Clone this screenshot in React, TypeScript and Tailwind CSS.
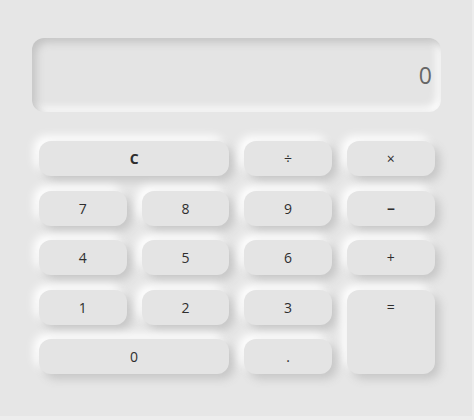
const keys: { label: string; className?: string }[] = [
  { label: "C", className: "col-span-2 font-bold" },
  { label: "÷" },
  { label: "×" },
  { label: "7" },
  { label: "8" },
  { label: "9" },
  { label: "−", className: "font-bold" },
  { label: "4" },
  { label: "5" },
  { label: "6" },
  { label: "+" },
  { label: "1" },
  { label: "2" },
  { label: "3" },
  { label: "=", className: "row-span-2 items-start pt-[6px]" },
  { label: "0", className: "col-span-2" },
  { label: "." },
];

export default function App() {
  return (
    <div className="min-h-screen bg-[#ededed] font-['Open_Sans','Noto_Sans',sans-serif]">
      <div className="w-[472px] h-[416px] bg-[#e6e6e6] pt-[38px] pl-[32px]">
        <div className="w-[409px] h-[74px] rounded-[12px] bg-[#e4e4e4] shadow-[inset_4px_4px_8px_#c2c2c2,inset_-4px_-4px_8px_#ffffff] flex items-center justify-end pr-[9px]">
          <span className="text-[23px] text-[#666666] leading-none">0</span>
        </div>
        <div className="mt-[29px] ml-[7px] grid grid-cols-[repeat(4,87.5px)] auto-rows-[35px] gap-x-[15.2px] gap-y-[14.5px]">
          {keys.map((k) => (
            <button
              key={k.label}
              className={`flex items-center justify-center rounded-[12px] bg-[#e4e4e4] text-[14px] text-[#2e2e2e] shadow-[5px_5px_10px_#c6c6c6,-5px_-5px_10px_#ffffff] ${k.className ?? ""}`}
            >
              {k.label}
            </button>
          ))}
        </div>
      </div>
    </div>
  );
}
